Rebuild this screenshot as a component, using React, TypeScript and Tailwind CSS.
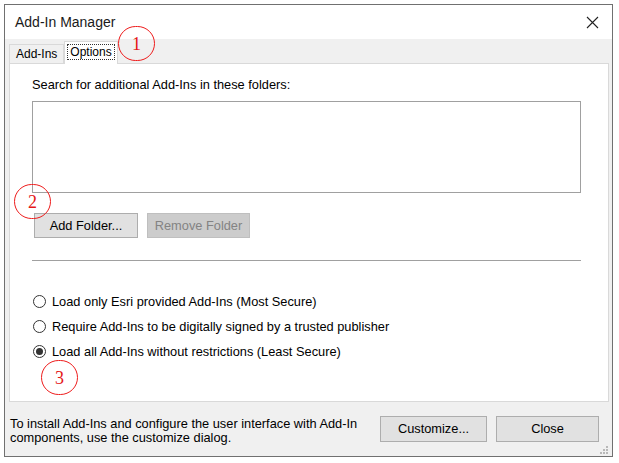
import React from "react";

function RedCircle({ n, className }: { n: string; className: string }) {
  return (
    <div
      className={`absolute w-[37px] h-[35px] rounded-full border-[1.6px] border-[#ee1c1c] flex items-center justify-center text-[#e51616] text-[18px] leading-none font-['Liberation_Serif',serif] ${className}`}
    >
      {n}
    </div>
  );
}

function Radio({ checked, label }: { checked?: boolean; label: string }) {
  return (
    <div className="flex items-center h-[25px]">
      <div className="w-[13px] h-[13px] rounded-full border border-[#333333] bg-white flex items-center justify-center">
        {checked && <div className="w-[7px] h-[7px] rounded-full bg-[#333333]" />}
      </div>
      <span className="ml-[6px]">{label}</span>
    </div>
  );
}

export default function App() {
  return (
    <div className="w-[619px] h-[463px] bg-white relative overflow-hidden font-['Liberation_Sans',sans-serif] text-[12.8px] leading-[14px] text-black">
      <div className="absolute left-[4px] top-[4px] w-[609px] h-[453px] border border-[#707070] bg-[#f0f0f0] flex flex-col">
        {/* title bar */}
        <div className="h-[34px] bg-white flex items-center justify-between pl-[10px] pr-[10px] shrink-0">
          <span className="text-[14px] text-[#1a1a1a]">Add-In Manager</span>
          <svg width="13" height="13" viewBox="0 0 13 13" className="mr-[3px]">
            <path d="M1 1 L12 12 M12 1 L1 12" stroke="#222" strokeWidth="1.1" fill="none" />
          </svg>
        </div>
        {/* body */}
        <div className="flex-1 flex flex-col pl-[4px] pr-[3px]">
          {/* tabs */}
          <div className="flex items-end h-[23px] mt-[1px] text-[12px]">
            <div className="h-[19px] px-[6px] border border-b-0 border-[#d9d9d9] bg-[#f0f0f0] flex items-center">
              Add-Ins
            </div>
            <div className="h-[23px] -mb-[1px] relative z-10 border border-b-0 border-[#d9d9d9] bg-white flex items-start pt-[2px] px-[2px]">
              <div className="border border-dotted border-[#333] h-[16px] px-[2px] flex items-center">Options</div>
            </div>
          </div>
          {/* panel */}
          <div className="h-[339px] bg-white border border-[#d9d9d9] pl-[22px] pr-[27px] pt-[14px] flex flex-col">
            <div className="h-[14px]">Search for additional Add-Ins in these folders:</div>
            <div className="mt-[9px] h-[92px] border border-[#a0a0a0] bg-white" />
            <div className="flex gap-[9px] mt-[20px] pl-[2px]">
              <div className="w-[104px] h-[25px] bg-[#e1e1e1] border border-[#adadad] flex items-center justify-center">
                Add Folder...
              </div>
              <div className="w-[103px] h-[25px] bg-[#cccccc] border border-[#bfbfbf] flex items-center justify-center text-[#838383]">
                Remove Folder
              </div>
            </div>
            <div className="mt-[22px] h-[2px] border-t border-[#a0a0a0] border-b border-b-white" />
            <div className="mt-[27px] flex flex-col pl-[1px]">
              <Radio label="Load only Esri provided Add-Ins (Most Secure)" />
              <Radio label="Require Add-Ins to be digitally signed by a trusted publisher" />
              <Radio checked label="Load all Add-Ins without restrictions (Least Secure)" />
            </div>
          </div>
          {/* bottom */}
          <div className="flex items-start pt-[14px] pl-[1px] relative flex-1">
            <div className="flex-1 pt-[1px]">
              <div>To install Add-Ins and configure the user interface with Add-In</div>
              <div>components, use the customize dialog.</div>
            </div>
            <div className="flex gap-[9px] mr-[10px]">
              <div className="w-[107px] h-[26px] bg-[#e1e1e1] border border-[#adadad] flex items-center justify-center">
                Customize...
              </div>
              <div className="w-[103px] h-[26px] bg-[#e1e1e1] border border-[#adadad] flex items-center justify-center">
                Close
              </div>
            </div>
            <svg width="8" height="8" viewBox="0 0 8 8" className="absolute right-[1px] bottom-[2px]">
              <rect x="6" y="0" width="2" height="2" fill="#b8b8b8" />
              <rect x="3" y="3" width="2" height="2" fill="#b8b8b8" />
              <rect x="6" y="3" width="2" height="2" fill="#b8b8b8" />
              <rect x="0" y="6" width="2" height="2" fill="#b8b8b8" />
              <rect x="3" y="6" width="2" height="2" fill="#b8b8b8" />
              <rect x="6" y="6" width="2" height="2" fill="#b8b8b8" />
            </svg>
          </div>
        </div>
      </div>
      <RedCircle n="1" className="left-[118px] top-[26px]" />
      <RedCircle n="2" className="left-[14px] top-[184px]" />
      <RedCircle n="3" className="left-[41px] top-[360px]" />
    </div>
  );
}
